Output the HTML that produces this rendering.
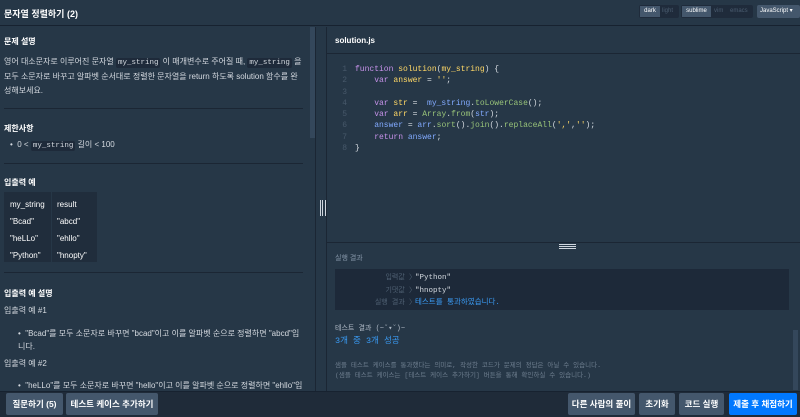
<!DOCTYPE html>
<html><head><meta charset="utf-8"><style>
*{margin:0;padding:0;box-sizing:border-box}
body{width:800px;height:417px;overflow:hidden;background:#263747;color:#d5dae0;font-family:"Liberation Sans","Noto Sans CJK KR",sans-serif;font-size:8px;position:relative}
.abs{position:absolute}
.mono{font-family:"Liberation Mono","Noto Sans CJK KR",monospace}
.top{left:0;top:0;width:800px;height:26px;border-bottom:1px solid #172230;background:#263747}
.code{background:#1e2a3a;padding:1px 2px;border-radius:2px;font-family:"Liberation Mono",monospace;font-size:7.5px}
h4{font-size:8px;font-weight:bold;color:#fff}
.hr{left:4px;width:299px;height:1px;background:#1b2634}
.btn{border-radius:2px;background:#44576c;color:#fff;font-weight:bold;font-size:8.5px;text-align:center;line-height:22px;top:393px;height:22px}
.cl{left:355px;font-family:"Liberation Mono",monospace;font-size:8px;white-space:pre;color:#d5dae0}
.ln{left:337px;width:10px;text-align:right;color:#47586a;font-family:"Liberation Mono",monospace;font-size:8px}
.k{color:#c792ea}.f{color:#ffd866}.s{color:#ffd866}.g{color:#98c379}.b{color:#82aaff}
</style></head><body>
<div class="abs top"></div>
<div class="abs" style="left:4px;top:7px;font-size:9px;font-weight:bold;color:#fff">문자열 정렬하기 (2)</div>
<div class="abs" style="left:639px;top:5px;width:40px;height:13px;background:#1f2b3b;border-radius:2px"></div>
<div class="abs" style="left:640px;top:6px;width:20px;height:11px;background:#44576c;color:#fff;font-size:6px;line-height:11px;text-align:center">dark</div>
<div class="abs" style="left:662px;top:6px;font-size:6px;line-height:11px;color:#4b5d70">light</div>
<div class="abs" style="left:681px;top:5px;width:72px;height:13px;background:#1f2b3b;border-radius:2px"></div>
<div class="abs" style="left:682px;top:6px;width:29px;height:11px;background:#44576c;color:#fff;font-size:6px;line-height:11px;text-align:center">sublime</div>
<div class="abs" style="left:714px;top:6px;font-size:6px;line-height:11px;color:#4b5d70">vim &nbsp;&nbsp; emacs</div>
<div class="abs" style="left:757px;top:5px;width:43px;height:13px;background:#44576c;color:#fff;font-size:6px;line-height:13px;padding-left:3px;border-radius:2px">JavaScript ▾</div>

<div class="abs" style="left:310px;top:27px;width:5px;height:111px;background:#34475b"></div>
<div class="abs" style="left:315px;top:27px;width:12px;height:365px;background:#263747;border-left:1px solid #1b2634;border-right:1px solid #1b2634"></div>
<div class="abs" style="left:320px;top:200px;width:6px;height:16px;border-left:1px solid #cfd6de;border-right:1px solid #cfd6de"><div style="margin-left:1px;width:1px;height:16px;background:#cfd6de"></div></div>

<div class="abs" style="left:4px;top:36px"><h4>문제 설명</h4></div>
<div class="abs" style="left:4px;top:55px;white-space:nowrap;line-height:14px;font-size:8px">영어 대소문자로 이루어진 문자열 <span class="code">my_string</span> 이 매개변수로 주어질 때, <span class="code">my_string</span> 을<br>모두 소문자로 바꾸고 알파벳 순서대로 정렬한 문자열을 return 하도록 solution 함수를 완<br>성해보세요.</div>
<div class="abs hr" style="top:108px"></div>
<div class="abs" style="left:4px;top:123px"><h4>제한사항</h4></div>
<div class="abs" style="left:10px;top:139px">• &nbsp;0 &lt; <span class="code">my_string</span> 길이 &lt; 100</div>
<div class="abs hr" style="top:163px"></div>
<div class="abs" style="left:4px;top:177px"><h4>입출력 예</h4></div>
<div class="abs" style="left:4px;top:192px;width:93px;height:70px;background:#202d3c"></div>
<div class="abs" style="left:51px;top:192px;width:1px;height:70px;background:#263747"></div>
<div class="abs" style="left:10px;top:196px;line-height:17px;color:#fff">my_string<br>"Bcad"<br>"heLLo"<br>"Python"</div>
<div class="abs" style="left:57px;top:196px;line-height:17px;color:#fff">result<br>"abcd"<br>"ehllo"<br>"hnopty"</div>
<div class="abs hr" style="top:272px"></div>
<div class="abs" style="left:4px;top:288px"><h4>입출력 예 설명</h4></div>
<div class="abs" style="left:4px;top:305px">입출력 예 #1</div>
<div class="abs" style="left:18px;top:327px;width:285px;line-height:13px">• &nbsp;"Bcad"를 모두 소문자로 바꾸면 "bcad"이고 이를 알파벳 순으로 정렬하면 "abcd"입니다.</div>
<div class="abs" style="left:4px;top:358px">입출력 예 #2</div>
<div class="abs" style="left:18px;top:380px;width:300px;white-space:nowrap">• &nbsp;"heLLo"를 모두 소문자로 바꾸면 "hello"이고 이를 알파벳 순으로 정렬하면 "ehllo"입</div>

<div class="abs" style="left:327px;top:53px;width:473px;height:1px;background:#1b2634"></div>
<div class="abs" style="left:335px;top:36px;font-weight:bold;color:#fff;font-size:8px">solution.js</div>
<div class="abs ln" style="top:64px;line-height:11.3px">1<br>2<br>3<br>4<br>5<br>6<br>7<br>8</div>
<div class="abs cl" style="top:64px;line-height:11.3px"><span class="k">function</span> <span class="f">solution</span>(<span class="f">my_string</span>) {
    <span class="k">var</span> <span class="f">answer</span> = <span class="s">''</span>;

    <span class="k">var</span> <span class="f">str</span> =  <span class="b">my_string</span>.<span class="g">toLowerCase</span>();
    <span class="k">var</span> <span class="f">arr</span> = <span class="g">Array</span>.<span class="g">from</span>(<span class="b">str</span>);
    <span class="b">answer</span> = <span class="b">arr</span>.<span class="g">sort</span>().<span class="g">join</span>().<span class="g">replaceAll</span>(<span class="s">','</span>,<span class="s">''</span>);
    <span class="k">return</span> <span class="b">answer</span>;
}</div>

<div class="abs" style="left:327px;top:242px;width:473px;height:1px;background:#1b2634"></div>
<div class="abs" style="left:559px;top:244px;width:17px;height:5px;border-top:1px solid #cfd6de;border-bottom:1px solid #cfd6de"><div style="margin-top:1px;height:1px;background:#cfd6de"></div></div>
<div class="abs" style="left:335px;top:253px;color:#8596a8;font-size:7px">실행 결과</div>
<div class="abs" style="left:335px;top:269px;width:454px;height:41px;background:#1d2939"></div>
<div class="abs mono" style="left:366px;top:272px;line-height:12.5px;font-size:7px;color:#4f6072;text-align:right;width:50px">입력값 〉<br>기댓값 〉<br>실행 결과 〉</div>
<div class="abs mono" style="left:415px;top:272px;line-height:12.5px;font-size:7.5px;color:#d5dae0">"Python"<br>"hnopty"<br><span style="color:#3a9bf4">테스트를 통과하였습니다.</span></div>
<div class="abs mono" style="left:335px;top:323px;font-size:7px;color:#b0bac6">테스트 결과 (~˘▾˘)~</div>
<div class="abs mono" style="left:335px;top:334px;font-size:8.5px;color:#3a9bf4">3개 중 3개 성공</div>
<div class="abs mono" style="left:335px;top:361px;font-size:6.5px;line-height:10px;color:#6d7d8e">샘플 테스트 케이스를 통과했다는 의미로, 작성한 코드가 문제의 정답은 아닐 수 있습니다.<br>(샘플 테스트 케이스는 [테스트 케이스 추가하기] 버튼을 통해 확인하실 수 있습니다.)</div>
<div class="abs" style="left:793px;top:330px;width:5px;height:60px;background:#34475b"></div>

<div class="abs" style="left:0;top:391px;width:800px;height:26px;background:#1f2b39;border-top:1px solid #172230"></div>
<div class="abs btn" style="left:6px;width:57px">질문하기 (5)</div>
<div class="abs btn" style="left:66px;width:92px">테스트 케이스 추가하기</div>
<div class="abs btn" style="left:568px;width:67px">다른 사람의 풀이</div>
<div class="abs btn" style="left:639px;width:36px">초기화</div>
<div class="abs btn" style="left:679px;width:45px">코드 실행</div>
<div class="abs btn" style="left:729px;width:68px;background:#0078ff">제출 후 채점하기</div>
</body></html>
